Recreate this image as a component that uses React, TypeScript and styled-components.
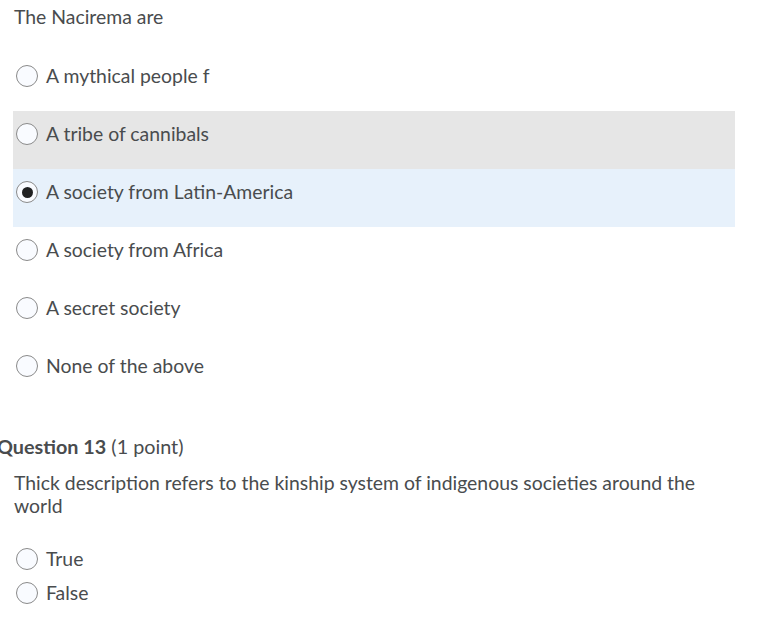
import React from "react";
import styled, { createGlobalStyle } from "styled-components";

const Global = createGlobalStyle`
  html, body { margin: 0; padding: 0; background: #ffffff; }
  body { font-family: Lato, "Open Sans", sans-serif; color: #494c4e; }
`;

const Page = styled.div`
  width: 766px;
  padding-top: 5px;
`;

const Block = styled.div`
  padding-left: 13px;
  width: 722px;
`;

const Prompt = styled.div`
  font-size: 19.4px;
  line-height: 23px;
  padding-left: 1px;
`;

const OptionList = styled.div`
  margin-top: 25px;
  display: flex;
  flex-direction: column;
`;

const Row = styled.div<{ $tone?: "hover" | "selected"; $compact?: boolean }>`
  display: flex;
  align-items: flex-start;
  gap: 8px;
  height: ${(p) => (p.$compact ? "34px" : "58px")};
  box-sizing: border-box;
  padding: ${(p) => (p.$compact ? "6px" : "12px")} 0 0 3px;
  background: ${(p) =>
    p.$tone === "hover" ? "#e6e6e6" : p.$tone === "selected" ? "#e7f1fb" : "transparent"};
`;

const Radio = styled.span<{ $checked?: boolean }>`
  width: 22px;
  height: 22px;
  box-sizing: border-box;
  border-radius: 50%;
  border: 1.5px solid #8a8a8a;
  background: #f9fbff;
  flex: none;
  display: flex;
  align-items: center;
  justify-content: center;
  &::after {
    content: "";
    display: ${(p) => (p.$checked ? "block" : "none")};
    width: 11px;
    height: 11px;
    border-radius: 50%;
    background: #202122;
  }
`;

const Label = styled.span`
  font-size: 19.4px;
  line-height: 22px;
`;

const QuestionHeader = styled.div`
  margin-top: 33px;
  margin-left: -3px;
  font-size: 19.8px;
  line-height: 24px;
`;

const Strong = styled.span`
  font-weight: 700;
`;

const QuestionText = styled.div`
  margin-top: 13px;
  font-size: 19.4px;
  line-height: 23px;
  padding-left: 1px;
`;

const TFList = styled.div`
  margin-top: 25px;
  display: flex;
  flex-direction: column;
`;

const options: { text: string; tone?: "hover" | "selected"; checked?: boolean }[] = [
  { text: "A mythical people f" },
  { text: "A tribe of cannibals", tone: "hover" },
  { text: "A society from Latin-America", tone: "selected", checked: true },
  { text: "A society from Africa" },
  { text: "A secret society" },
  { text: "None of the above" },
];

export default function App() {
  return (
    <Page>
      <Global />
      <Block>
        <Prompt>The Nacirema are</Prompt>
        <OptionList>
          {options.map((o) => (
            <Row key={o.text} $tone={o.tone}>
              <Radio $checked={o.checked} />
              <Label>{o.text}</Label>
            </Row>
          ))}
        </OptionList>
      </Block>
      <QuestionHeader>
        <Strong>Question 13</Strong> (1 point)
      </QuestionHeader>
      <Block>
        <QuestionText>
          Thick description refers to the kinship system of indigenous societies around the world
        </QuestionText>
        <TFList>
          <Row $compact>
            <Radio />
            <Label>True</Label>
          </Row>
          <Row $compact>
            <Radio />
            <Label>False</Label>
          </Row>
        </TFList>
      </Block>
    </Page>
  );
}
